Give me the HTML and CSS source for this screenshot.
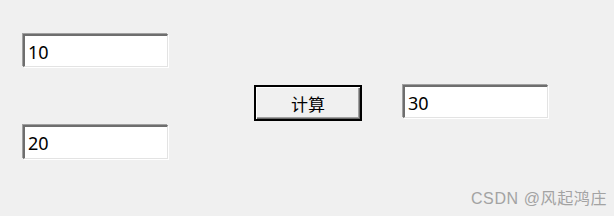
FILE: index.html
```html
<!DOCTYPE html>
<html lang="zh-CN">
<head>
    <meta charset="UTF-8">
    <title>计算</title>
    <link rel="stylesheet" href="styles.css">
</head>
<body>
    <div class="form">
        <div class="inputs">
            <input class="field" type="text" value="10">
            <input class="field" type="text" value="20">
        </div>
        <button class="calc">计算</button>
        <input class="field result" type="text" value="30">
    </div>
    <div class="watermark">CSDN @风起鸿庄</div>
</body>
</html>
```

FILE: styles.css
```css
html, body {
    margin: 0;
    height: 100%;
}
body {
    background: #f0f0f0;
    font-family: "Noto Sans", "Noto Sans CJK SC", sans-serif;
    overflow: hidden;
}
.form {
    display: flex;
    align-items: flex-start;
    padding: 34px 0 0 23px;
}
.inputs {
    display: flex;
    flex-direction: column;
    gap: 58px;
}
.field {
    box-sizing: border-box;
    width: 145px;
    height: 33px;
    margin: 0;
    padding: 1px 0 0 3px;
    border-style: solid;
    border-width: 2px 1px 1px 2px;
    border-color: #6e6e6e #e3e3e3 #e3e3e3 #6e6e6e;
    box-shadow: -1px -1px 0 #a0a0a0, 1px 1px 0 #ffffff;
    background: #ffffff;
    color: #000000;
    font-family: "Noto Sans", "Noto Sans CJK SC", sans-serif;
    font-size: 18px;
    outline: none;
}
.inputs .field:last-child {
    height: 34px;
}
.calc {
    box-sizing: border-box;
    width: 108px;
    height: 36px;
    margin: 51px 0 0 86px;
    padding: 0;
    border: 2px solid #000000;
    box-shadow: inset 1px 1px 0 #ffffff, inset -1px -1px 0 #696969, inset -2px -2px 0 #a0a0a0;
    background: #f0f0f0;
    color: #000000;
    font-family: "Noto Sans CJK SC", sans-serif;
    font-size: 17px;
}
.result {
    margin: 51px 0 0 41px;
}
.watermark {
    margin-top: 26px;
    padding-right: 7px;
    text-align: right;
    color: #a3a3a3;
    font-family: "Liberation Sans", "Noto Sans CJK SC", sans-serif;
    font-size: 16px;
    letter-spacing: 0.6px;
}
```
